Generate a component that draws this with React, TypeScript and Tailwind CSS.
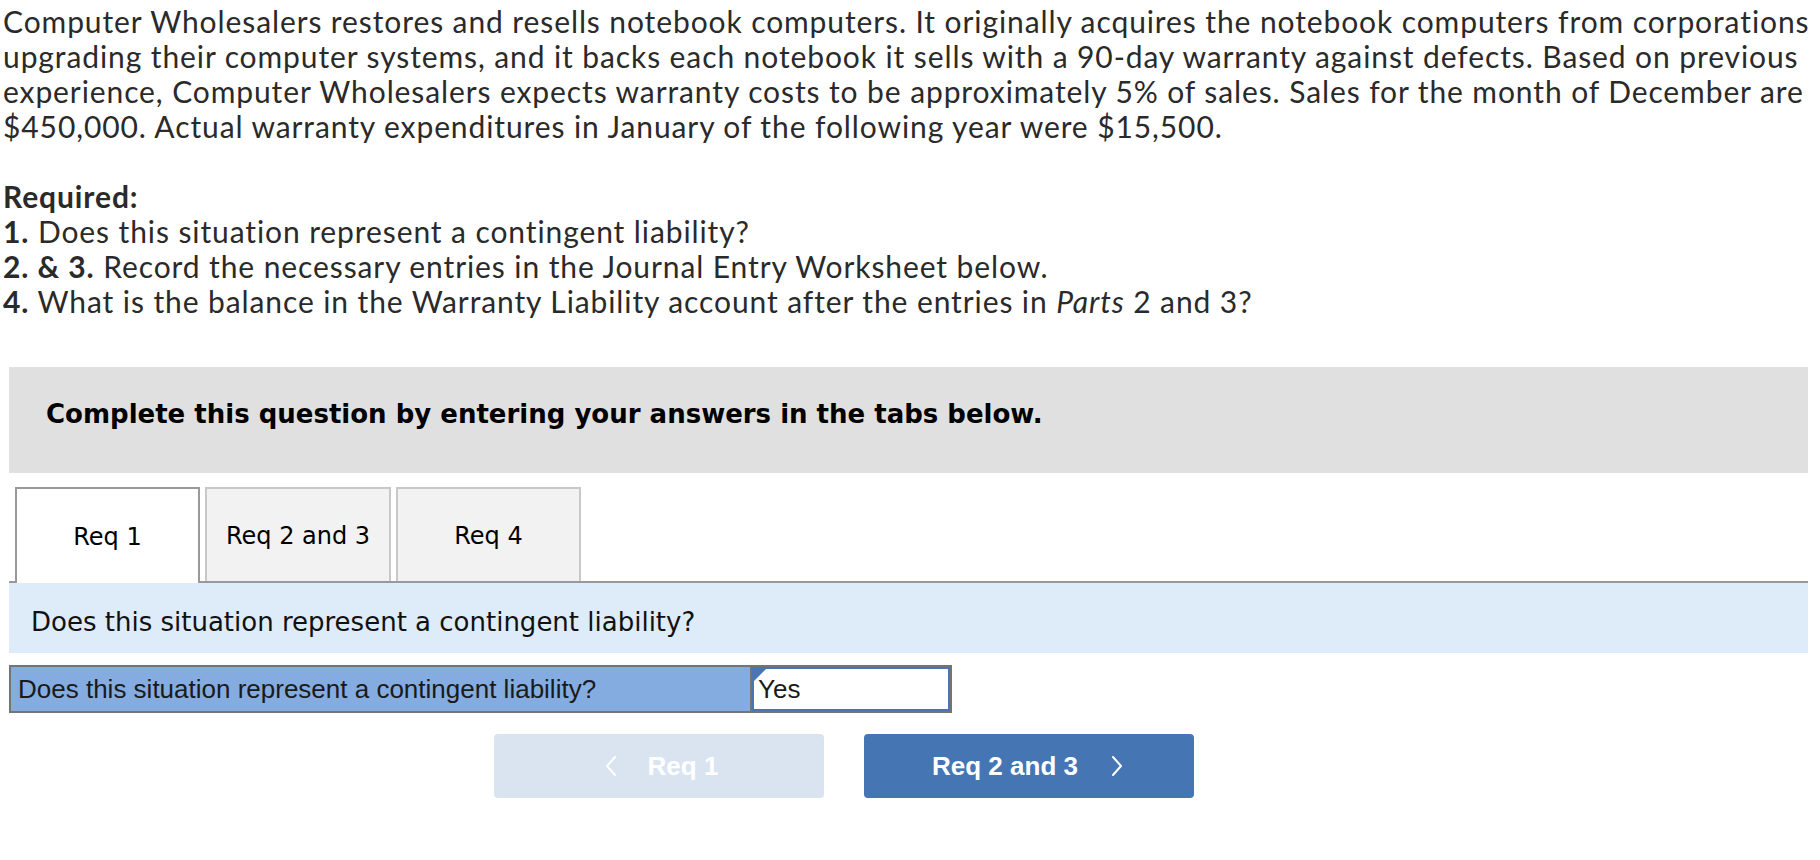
import React from "react";

function ChevronLeft() {
  return (
    <svg width="14" height="22" viewBox="0 0 14 22" fill="none">
      <path d="M11 2 L3 11 L11 20" stroke="white" strokeWidth="2" strokeLinecap="round" strokeLinejoin="round" />
    </svg>
  );
}

function ChevronRight() {
  return (
    <svg width="14" height="22" viewBox="0 0 14 22" fill="none">
      <path d="M3 2 L11 11 L3 20" stroke="white" strokeWidth="2" strokeLinecap="round" strokeLinejoin="round" />
    </svg>
  );
}

export default function App() {
  const intro = [
    "Computer Wholesalers restores and resells notebook computers. It originally acquires the notebook computers from corporations",
    "upgrading their computer systems, and it backs each notebook it sells with a 90-day warranty against defects. Based on previous",
    "experience, Computer Wholesalers expects warranty costs to be approximately 5% of sales. Sales for the month of December are",
    "$450,000. Actual warranty expenditures in January of the following year were $15,500.",
  ];
  return (
    <div className="w-[1820px] h-[860px] bg-white overflow-hidden">
      <div className="pt-[4px] pl-[3px] text-[#2a2a2a] font-['Lato',sans-serif] text-[30px] leading-[35px] tracking-[0.9px]">
        {intro.map((l, i) => (
          <div key={i} className="whitespace-nowrap">{l}</div>
        ))}
        <div className="h-[35px]" />
        <div className="font-bold whitespace-nowrap">Required:</div>
        <div className="whitespace-nowrap"><b>1.</b> Does this situation represent a contingent liability?</div>
        <div className="whitespace-nowrap"><b>2. &amp; 3.</b> Record the necessary entries in the Journal Entry Worksheet below.</div>
        <div className="whitespace-nowrap"><b>4.</b> What is the balance in the Warranty Liability account after the entries in <i>Parts</i> 2 and 3?</div>
      </div>

      <div className="ml-[9px] w-[1799px] mt-[48px]">
        <div className="h-[106px] bg-[#e0e0e0] flex items-center pl-[37px] pb-[12px] font-['DejaVu_Sans',sans-serif] font-bold text-[26px] text-black">
          Complete this question by entering your answers in the tabs below.
        </div>

        <div className="mt-[14px] flex items-end gap-[5px] pl-[6px] border-b-2 border-[#999999] h-[96px] font-['DejaVu_Sans',sans-serif] text-[24px] text-black">
          <div className="w-[185px] h-[96px] -mb-[2px] bg-white border-2 border-b-0 border-[#999999] flex items-center justify-center pt-[2px]">
            Req 1
          </div>
          <div className="w-[186px] h-[94px] bg-[#f2f2f2] border-2 border-b-0 border-[#c8c8c8] flex items-center justify-center pt-[2px]">
            Req 2 and 3
          </div>
          <div className="w-[185px] h-[94px] bg-[#f2f2f2] border-2 border-b-0 border-[#c8c8c8] flex items-center justify-center pt-[2px]">
            Req 4
          </div>
        </div>

        <div className="h-[70px] bg-[#deebf8] flex items-center pl-[22px] pt-[8px] font-['DejaVu_Sans',sans-serif] text-[26px] text-[#111]">
          Does this situation represent a contingent liability?
        </div>

        <div className="mt-[12px] w-[943px] h-[48px] border-2 border-[#747474] flex font-['Liberation_Sans',Arial,sans-serif] text-[26px] text-[#1a1a1a]">
          <div className="w-[741px] h-full bg-[#84ace0] border-r-2 border-[#747474] flex items-center pl-[7px] whitespace-nowrap">
            Does this situation represent a contingent liability?
          </div>
          <div className="relative flex-1 h-full bg-white border-2 border-[#4a74b4] flex items-center pl-[4px]">
            <div className="absolute left-0 top-0 w-0 h-0 border-t-[12px] border-t-[#4a74b4] border-r-[12px] border-r-transparent" />
            Yes
          </div>
        </div>

        <div className="mt-[21px] flex gap-[40px] pl-[485px] font-['Liberation_Sans',Arial,sans-serif] font-bold text-[26px] text-white">
          <div className="w-[330px] h-[64px] rounded-[4px] bg-[#dae4f0] flex items-center justify-center gap-[30px] pl-[4px]">
            <ChevronLeft />
            <span>Req 1</span>
          </div>
          <div className="w-[330px] h-[64px] rounded-[4px] bg-[#4675b4] flex items-center justify-center gap-[32px] pr-[2px]">
            <span>Req 2 and 3</span>
            <ChevronRight />
          </div>
        </div>
      </div>
    </div>
  );
}
